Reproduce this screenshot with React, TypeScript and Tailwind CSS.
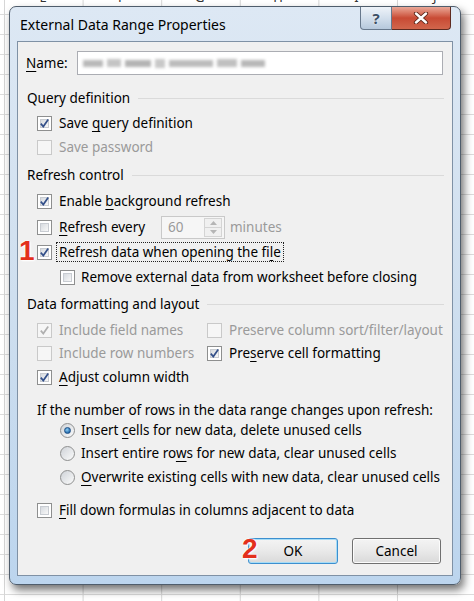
import React from "react";

function Check({ checked = false, disabled = false }: { checked?: boolean; disabled?: boolean }) {
  return (
    <span
      className={
        disabled
          ? "relative flex h-[15px] w-[15px] shrink-0 items-center justify-center border border-[#c9c9c9] bg-[#f6f6f6]"
          : "relative flex h-[15px] w-[15px] shrink-0 items-center justify-center border border-[#8e8f8f] bg-white"
      }
    >
      {!disabled && (
        <span className="absolute inset-[2px] border border-[#c8ccd2] bg-linear-to-br from-[#d7dbe0] to-[#f8f8f8]" />
      )}
      {checked && (
        <svg className="relative" width="11" height="11" viewBox="0 0 11 11">
          <path
            d="M1.8 5.6 L4.3 8.6 L9.2 1.6"
            fill="none"
            stroke={disabled ? "#b0b0b0" : "#33508a"}
            strokeWidth="1.7"
          />
        </svg>
      )}
    </span>
  );
}

function Radio({ checked = false }: { checked?: boolean }) {
  return (
    <span className="flex h-[15px] w-[15px] shrink-0 items-center justify-center rounded-full border border-[#8e8f8f] bg-linear-to-br from-[#cfd3d8] to-[#fbfbfb]">
      {checked && (
        <span className="h-[7px] w-[7px] rounded-full border border-[#1d4f86] bg-[radial-gradient(circle_at_40%_35%,#8fd0f5,#1f65a8_75%)]" />
      )}
    </span>
  );
}

function U({ children }: { children: React.ReactNode }) {
  return <span className="underline decoration-1 underline-offset-[3px]">{children}</span>;
}

function Header({ children, cls }: { children: React.ReactNode; cls: string }) {
  return (
    <div className={cls}>
      <span>{children}</span>
      <span className="ml-[8px] h-px flex-1 bg-[#dadada]" />
    </div>
  );
}

export default function App() {
  return (
    <div className="relative h-[601px] w-[474px] overflow-hidden bg-white bg-[linear-gradient(to_right,#d6d6d6_1px,transparent_1px),linear-gradient(to_bottom,#dcdcdc_1px,transparent_1px)] bg-[size:78.6px_20px] bg-[position:4px_14px] font-['Segoe_UI','Noto_Sans','Open_Sans',sans-serif]">
      {/* column header letters, mostly hidden behind the top edge */}
      <div className="-mt-[11px] ml-[4px] flex text-[13px] leading-[16px] text-[#333]">
        <span className="w-[78.6px] text-center">E</span>
        <span className="w-[78.6px] text-center">F</span>
        <span className="w-[78.6px] text-center">G</span>
        <span className="w-[78.6px] text-center">H</span>
        <span className="w-[78.6px] text-center">I</span>
        <span className="w-[78.6px] text-center">J</span>
      </div>

      {/* window */}
      <div className="absolute left-[9px] top-[6px] flex h-[579px] w-[452px] flex-col rounded-[7px] border border-[#4f5d6c] bg-linear-to-b from-[#dde8f4] via-[#cfdfef] to-[#bcd5ee] shadow-[3px_5px_9px_rgba(0,0,0,0.55)]">
        <div className="relative flex h-[34px] shrink-0 items-center pl-[10px] text-[14px] text-black">
          <span className="mt-[1px]">External Data Range Properties</span>
          <div className="absolute right-[9px] top-0 flex">
            <div className="flex h-[23px] w-[32px] items-center justify-center rounded-bl-[4px] border border-t-0 border-[#67788c] bg-linear-to-b from-[#eef3f9] via-[#d3dfec] to-[#b6c8dc] text-[15px] font-bold leading-none text-[#3c4f66] [text-shadow:0_0_2px_#fff]">
              ?
            </div>
            <div className="flex h-[23px] w-[59px] items-center justify-center rounded-br-[4px] border border-l-0 border-t-0 border-[#5e2a20] bg-linear-to-b from-[#e9a797] via-[#c84a34] to-[#d2664c]">
              <svg width="16" height="12" viewBox="0 0 16 12">
                <path d="M3 1.5 L13 10.5 M13 1.5 L3 10.5" stroke="#5a2418" strokeWidth="4.2" strokeLinecap="round" />
                <path d="M3 1.5 L13 10.5 M13 1.5 L3 10.5" stroke="#ffffff" strokeWidth="2.4" strokeLinecap="round" />
              </svg>
            </div>
          </div>
        </div>

        <div className="mx-[7px] mb-[8px] flex flex-1 flex-col border border-[#7f91a5] bg-[#f0f0f0] text-[13.5px] text-black">
          {/* Name */}
          <div className="mt-[9px] flex h-[24px] items-center pl-[8px]">
            <span className="w-[51px]">
              <U>N</U>ame:
            </span>
            <div className="flex h-[24px] w-[366px] items-center gap-[4px] border border-[#abadb3] bg-white pl-[5px]">
              <span className="h-[7px] w-[20px] bg-[#b9b9b9] blur-[1.5px]" />
              <span className="h-[8px] w-[14px] bg-[#c4c4c4] blur-[1.5px]" />
              <span className="h-[7px] w-[26px] bg-[#b4b4b4] blur-[1.5px]" />
              <span className="h-[9px] w-[10px] bg-[#c8c8c8] blur-[1.5px]" />
              <span className="h-[7px] w-[44px] bg-[#bcbcbc] blur-[1.5px]" />
              <span className="h-[8px] w-[20px] bg-[#c0c0c0] blur-[1.5px]" />
              <span className="h-[7px] w-[24px] bg-[#b8b8b8] blur-[1.5px]" />
            </div>
          </div>

          <Header cls="mt-[11px] flex h-[24px] items-center pl-[9px] pr-[8px]">Query definition</Header>
          <div className="mt-[1px] flex h-[24px] items-center gap-[7px] pl-[19px]">
            <Check checked />
            <span>
              Save <U>q</U>uery definition
            </span>
          </div>
          <div className="flex h-[24px] items-center gap-[7px] pl-[19px] text-[#9a9a9a]">
            <Check disabled />
            <span>Save password</span>
          </div>

          <Header cls="mt-[4px] flex h-[24px] items-center pl-[9px] pr-[8px]">Refresh control</Header>
          <div className="mt-[2px] flex h-[24px] items-center gap-[7px] pl-[19px]">
            <Check checked />
            <span>
              Enable <U>b</U>ackground refresh
            </span>
          </div>
          <div className="mt-[2px] flex h-[24px] items-center pl-[19px]">
            <Check />
            <span className="ml-[7px] w-[102px]">
              <U>R</U>efresh every
            </span>
            <div className="flex h-[23px] w-[64px] items-center border border-[#c9c9c9] bg-[#f6f6f6] text-[#9a9a9a]">
              <span className="flex-1 pl-[6px]">60</span>
              <div className="mr-[2px] flex h-[19px] w-[18px] flex-col">
                <span className="flex flex-1 items-center justify-center border border-[#d4d4d4] bg-[#f0f0f0]">
                  <svg width="7" height="4" viewBox="0 0 7 4">
                    <path d="M0 4 L3.5 0 L7 4 Z" fill="#b5b5b5" />
                  </svg>
                </span>
                <span className="flex flex-1 items-center justify-center border border-t-0 border-[#d4d4d4] bg-[#f0f0f0]">
                  <svg width="7" height="4" viewBox="0 0 7 4">
                    <path d="M0 0 L3.5 4 L7 0 Z" fill="#b5b5b5" />
                  </svg>
                </span>
              </div>
            </div>
            <span className="ml-[5px] text-[#9a9a9a]">minutes</span>
          </div>
          <div className="mt-[1px] flex h-[24px] items-center gap-[4px] pl-[19px]">
            <Check checked />
            <span className="flex h-[20px] items-center border border-dotted border-[#222] px-[2px]">
              Refresh data when opening the fi<U>l</U>e
            </span>
          </div>
          <div className="mt-[1px] flex h-[24px] items-center gap-[6px] pl-[42px]">
            <Check />
            <span>
              Remove external <U>d</U>ata from worksheet before closing
            </span>
          </div>

          <Header cls="mt-[3px] flex h-[24px] items-center pl-[9px] pr-[8px]">Data formatting and layout</Header>
          <div className="mt-[2px] flex h-[24px] items-center pl-[19px] text-[#9a9a9a]">
            <div className="flex w-[170px] items-center gap-[7px]">
              <Check checked disabled />
              <span>Include field names</span>
            </div>
            <div className="flex items-center gap-[7px]">
              <Check disabled />
              <span>Preserve column sort/filter/layout</span>
            </div>
          </div>
          <div className="-mt-[1px] flex h-[24px] items-center pl-[19px]">
            <div className="flex w-[170px] items-center gap-[7px] text-[#9a9a9a]">
              <Check disabled />
              <span>Include row numbers</span>
            </div>
            <div className="flex items-center gap-[7px]">
              <Check checked />
              <span>
                Pre<U>s</U>erve cell formatting
              </span>
            </div>
          </div>
          <div className="flex h-[24px] items-center gap-[7px] pl-[19px]">
            <Check checked />
            <span>
              <U>A</U>djust column width
            </span>
          </div>

          <div className="mt-[9px] flex h-[24px] items-center pl-[19px]">
            If the number of rows in the data range changes upon refresh:
          </div>
          <div className="-mt-[4px] flex h-[24px] items-center gap-[6px] pl-[42px]">
            <Radio checked />
            <span>
              Insert <U>c</U>ells for new data, delete unused cells
            </span>
          </div>
          <div className="-mt-[1px] flex h-[24px] items-center gap-[6px] pl-[42px]">
            <Radio />
            <span>
              Insert entire ro<U>w</U>s for new data, clear unused cells
            </span>
          </div>
          <div className="flex h-[24px] items-center gap-[6px] pl-[42px]">
            <Radio />
            <span>
              <U>O</U>verwrite existing cells with new data, clear unused cells
            </span>
          </div>

          <div className="mt-[9px] flex h-[24px] items-center gap-[7px] pl-[19px]">
            <Check />
            <span>
              <U>F</U>ill down formulas in columns adjacent to data
            </span>
          </div>

          <div className="mt-[16px] flex justify-end gap-[14px] pr-[11px]">
            <button className="flex h-[26px] w-[90px] items-center justify-center rounded-[3px] border border-[#3c8fcf] bg-linear-to-b from-[#f4f4f4] via-[#e9e9e9] to-[#d9d9d9] shadow-[inset_0_0_0_1px_#a6dcf6] text-[13.5px]">
              OK
            </button>
            <button className="flex h-[26px] w-[89px] items-center justify-center rounded-[3px] border border-[#707070] bg-linear-to-b from-[#f4f4f4] via-[#e9e9e9] to-[#d9d9d9] shadow-[inset_0_0_0_1px_#fcfcfc] text-[13.5px]">
              Cancel
            </button>
          </div>
        </div>
      </div>

      {/* annotation badges */}
      <span className="absolute left-[19px] top-[235px] font-['Liberation_Sans',Arial,sans-serif] text-[28px] font-bold leading-[32px] text-[#e3301c] [text-shadow:0_0_2px_#fff,0_0_2px_#fff,1px_1px_2px_#fff]">
        1
      </span>
      <span className="absolute left-[242px] top-[533px] font-['Liberation_Sans',Arial,sans-serif] text-[28px] font-bold leading-[32px] text-[#e3301c] [text-shadow:0_0_2px_#fff,0_0_2px_#fff,1px_1px_2px_#fff]">
        2
      </span>
    </div>
  );
}
